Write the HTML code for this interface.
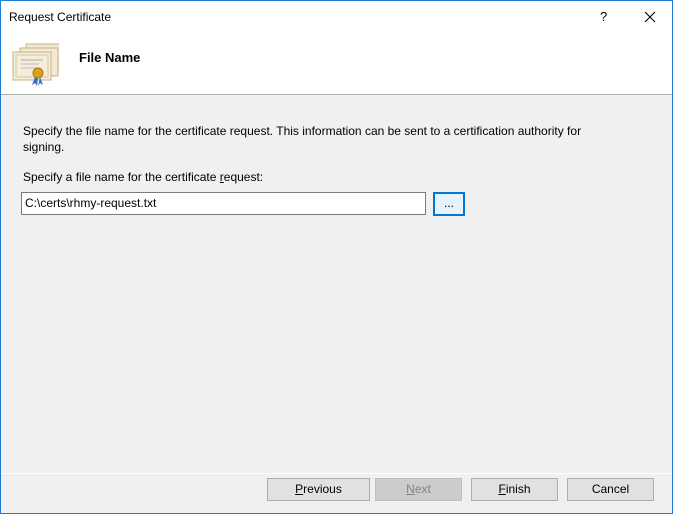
<!DOCTYPE html>
<html><head><style>
*{margin:0;padding:0;box-sizing:border-box}
body{width:673px;height:514px;overflow:hidden;font-family:"Liberation Sans",sans-serif;font-size:12px;color:#000;background:#f0f0f0}
.win{position:absolute;left:0;top:0;width:673px;height:514px;border:1px solid #1a7fd4;background:#f0f0f0}
.top{position:absolute;left:0;top:0;width:671px;height:94px;background:#fff;border-bottom:1px solid #b0b0b0}
.t{position:absolute;font-size:12px}
.btn{position:absolute;top:477px;height:23px;background:#e1e1e1;border:1px solid #adadad;text-align:center;line-height:21px;font-size:12px}
u{text-decoration:underline}
</style></head><body>
<div class="win">
<div class="top">
<div class="t" style="left:8px;top:9px">Request Certificate</div>
<div class="t" style="left:599px;top:8px;font-size:13px">?</div>
<svg style="position:absolute;left:643px;top:10px" width="12" height="12" viewBox="0 0 12 12"><path d="M1 1L11 11M11 1L1 11" stroke="#000" stroke-width="1.1"/></svg>
<svg style="position:absolute;left:8px;top:40px" width="50" height="45" viewBox="0 0 50 45">
<rect x="17" y="3" width="38" height="28" fill="#f2e8d4" stroke="#c7b08a"/>
<rect x="11" y="7" width="38" height="28" fill="#f2e8d4" stroke="#c7b08a"/>
<rect x="4" y="11" width="38" height="28" fill="#f5ecd9" stroke="#c7b08a"/>
<rect x="7" y="14" width="32" height="22" fill="none" stroke="#d8c7a4"/>
<line x1="12" y1="19" x2="34" y2="19" stroke="#aaa"/><line x1="12" y1="23" x2="30" y2="23" stroke="#bbb"/><line x1="12" y1="27" x2="28" y2="27" stroke="#bbb"/>
<path d="M26 36 l-3 8 l3 -2 l2 3 l1-8z M31 36 l3 8 l-3-2 l-2 3z" fill="#2f6fd0"/>
<circle cx="29" cy="32" r="5" fill="#d9a21a" stroke="#a87510"/>
</svg>
<div class="t" style="left:78px;top:49px;font-weight:bold;font-size:13px">File Name</div>
</div>
<div class="t" style="left:22px;top:122px;line-height:16px;width:600px">Specify the file name for the certificate request. This information can be sent to a certification authority for signing.</div>
<div class="t" style="left:22px;top:169px">Specify a file name for the certificate <u>r</u>equest:</div>
<div style="position:absolute;left:20px;top:191px;width:405px;height:23px;background:#fff;border:1px solid #7a7a7a;padding:3px 3px;font-size:12px">C:\certs\rhmy-request.txt</div>
<div style="position:absolute;left:432px;top:191px;width:32px;height:24px;background:#e5f1fb;border:2px solid #0078d7;text-align:center;line-height:18px">...</div>
<div style="position:absolute;left:0;top:472px;width:671px;height:1px;background:#fff"></div>
<div class="btn" style="left:266px;width:103px"><u>P</u>revious</div>
<div class="btn" style="left:374px;width:87px;background:#cccccc;border-color:#bfbfbf;color:#838383"><u>N</u>ext</div>
<div class="btn" style="left:470px;width:87px"><u>F</u>inish</div>
<div class="btn" style="left:566px;width:87px">Cancel</div>
</div>
</body></html>
